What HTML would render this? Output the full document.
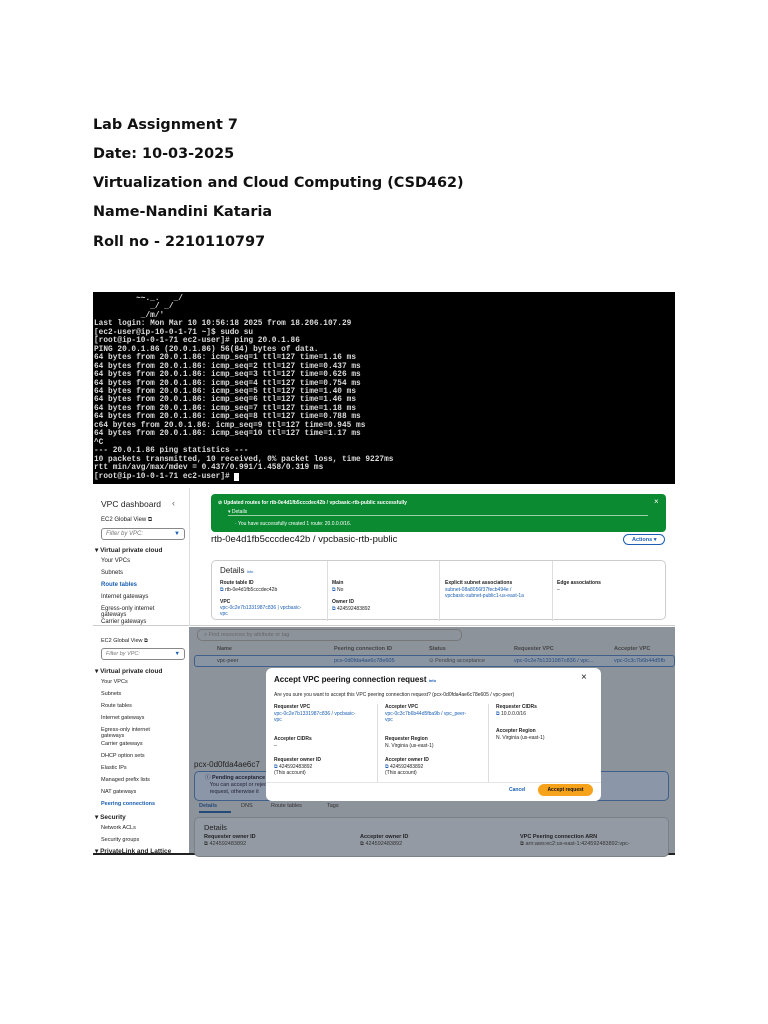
<!DOCTYPE html>
<html><head><meta charset="utf-8"><style>
*{margin:0;padding:0;box-sizing:border-box}
body{width:768px;height:1024px;background:#fff;position:relative;overflow:hidden;font-family:"DejaVu Sans","Liberation Sans",sans-serif}
.h{position:absolute;left:93px;font-weight:bold;font-size:14.4px;color:#111;white-space:nowrap}
.a{position:absolute;white-space:nowrap}
.term{position:absolute;left:93px;top:292px;width:582px;height:192px;background:#000;color:#dcdcdc;font-family:"Liberation Mono",monospace;font-weight:bold;font-size:7.8px;line-height:8.45px;padding:3px 0 0 1px;white-space:pre}
.s{font-family:"Liberation Sans",sans-serif;color:#222}
.lk{color:#1a5fb4}
</style></head><body>
<div class="h" style="top:117px">Lab Assignment 7</div>
<div class="h" style="top:146px">Date: 10-03-2025</div>
<div class="h" style="top:175px">Virtualization and Cloud Computing (CSD462)</div>
<div class="h" style="top:204px">Name-Nandini Kataria</div>
<div class="h" style="top:234px">Roll no - 2210110797</div>

<div class="term">         ~~._.   _/
            _/ _/
          _/m/'
Last login: Mon Mar 10 10:56:18 2025 from 18.206.107.29
[ec2-user@ip-10-0-1-71 ~]$ sudo su
[root@ip-10-0-1-71 ec2-user]# ping 20.0.1.86
PING 20.0.1.86 (20.0.1.86) 56(84) bytes of data.
64 bytes from 20.0.1.86: icmp_seq=1 ttl=127 time=1.16 ms
64 bytes from 20.0.1.86: icmp_seq=2 ttl=127 time=0.437 ms
64 bytes from 20.0.1.86: icmp_seq=3 ttl=127 time=0.626 ms
64 bytes from 20.0.1.86: icmp_seq=4 ttl=127 time=0.754 ms
64 bytes from 20.0.1.86: icmp_seq=5 ttl=127 time=1.40 ms
64 bytes from 20.0.1.86: icmp_seq=6 ttl=127 time=1.46 ms
64 bytes from 20.0.1.86: icmp_seq=7 ttl=127 time=1.18 ms
64 bytes from 20.0.1.86: icmp_seq=8 ttl=127 time=0.788 ms
c64 bytes from 20.0.1.86: icmp_seq=9 ttl=127 time=0.945 ms
64 bytes from 20.0.1.86: icmp_seq=10 ttl=127 time=1.17 ms
^C
--- 20.0.1.86 ping statistics ---
10 packets transmitted, 10 received, 0% packet loss, time 9227ms
rtt min/avg/max/mdev = 0.437/0.991/1.458/0.319 ms
[root@ip-10-0-1-71 ec2-user]# <span style="background:#fff">&nbsp;</span></div>

<!-- screenshot 2 -->
<div class="a s" style="left:93px;top:488px;width:582px;height:138px;background:#fff;border-bottom:1px solid #ccc;font-size:6px">
  <div class="a" style="left:96px;top:0;width:1px;height:138px;background:#ddd"></div>
  <div class="a" style="left:8px;top:11px;font-size:8.5px">VPC dashboard</div>
  <div class="a" style="left:79px;top:10px;font-size:9px;color:#666">‹</div>
  <div class="a" style="left:8px;top:29px">EC2 Global View ⧉</div>
  <div class="a" style="left:8px;top:40px;width:84px;height:12px;border:1px solid #888;border-radius:3px;font-style:italic;color:#777;padding:2px 4px">Filter by VPC: <span style="float:right;color:#1a5fb4">▼</span></div>
  <div class="a" style="left:2px;top:58px;font-weight:bold;font-size:6.5px">▾ Virtual private cloud</div>
  <div class="a" style="left:8px;top:70px">Your VPCs</div>
  <div class="a" style="left:8px;top:82px">Subnets</div>
  <div class="a lk" style="left:8px;top:94px;font-weight:bold">Route tables</div>
  <div class="a" style="left:8px;top:106px">Internet gateways</div>
  <div class="a" style="left:8px;top:118px">Egress-only internet<br>gateways</div>
  <div class="a" style="left:8px;top:131px">Carrier gateways</div>
  <div class="a" style="left:118px;top:6px;width:455px;height:38px;background:#0b8a32;border-radius:4px;color:#fff;font-size:5px">
    <div class="a" style="left:7px;top:6px;font-weight:bold">⊘ Updated routes for rtb-0e4d1fb5cccdec42b / vpcbasic-rtb-public successfully</div>
    <div class="a" style="left:17px;top:15px">▾ Details</div>
    <div class="a" style="left:17px;top:21px;width:420px;height:1px;background:#9fd1a9"></div>
    <div class="a" style="left:24px;top:27px">· You have successfully created 1 route: 20.0.0.0/16.</div>
    <div class="a" style="left:443px;top:3px;font-size:8px">×</div>
  </div>
  <div class="a" style="left:118px;top:46px;font-size:9.5px;color:#111">rtb-0e4d1fb5cccdec42b / vpcbasic-rtb-public</div>
  <div class="a lk" style="left:530px;top:46px;width:42px;height:11px;border:1px solid #1a5fb4;border-radius:6px;font-weight:bold;font-size:5.5px;padding:2px 0 0 8px">Actions ▾</div>
  <div class="a" style="left:118px;top:72px;width:455px;height:60px;border:1px solid #ccc;border-radius:5px">
    <div class="a" style="left:8px;top:5px;font-size:8px">Details <span class="lk" style="font-size:4px">Info</span></div>
    <div class="a" style="left:8px;top:19px;font-weight:bold;font-size:5px">Route table ID</div>
    <div class="a" style="left:8px;top:26px;font-size:5px"><span class="lk">⧉</span> rtb-0e4d1fb5cccdec42b</div>
    <div class="a" style="left:8px;top:38px;font-weight:bold;font-size:5px">VPC</div>
    <div class="a lk" style="left:8px;top:44px;font-size:5px">vpc-0c2e7b1331987c836 | vpcbasic-<br>vpc</div>
    <div class="a" style="left:115px;top:0;width:1px;height:60px;background:#ddd"></div>
    <div class="a" style="left:120px;top:19px;font-weight:bold;font-size:5px">Main</div>
    <div class="a" style="left:120px;top:26px;font-size:5px"><span class="lk">⧉</span> No</div>
    <div class="a" style="left:120px;top:38px;font-weight:bold;font-size:5px">Owner ID</div>
    <div class="a" style="left:120px;top:45px;font-size:5px"><span class="lk">⧉</span> 424592483892</div>
    <div class="a" style="left:227px;top:0;width:1px;height:60px;background:#ddd"></div>
    <div class="a" style="left:233px;top:19px;font-weight:bold;font-size:5px">Explicit subnet associations</div>
    <div class="a lk" style="left:233px;top:26px;font-size:5px">subnet-08a8056f37fecb494e /<br>vpcbasic-subnet-public1-us-east-1a</div>
    <div class="a" style="left:340px;top:0;width:1px;height:60px;background:#ddd"></div>
    <div class="a" style="left:345px;top:19px;font-weight:bold;font-size:5px">Edge associations</div>
    <div class="a" style="left:345px;top:26px;font-size:5px">–</div>
  </div>
</div>

<!-- screenshot 3 -->
<div class="a s" style="left:93px;top:627px;width:582px;height:228px;background:#fff;font-size:5.5px;border-bottom:2px solid #222">
  <div class="a" style="left:8px;top:11px">EC2 Global View ⧉</div>
  <div class="a" style="left:8px;top:21px;width:84px;height:12px;border:1px solid #888;border-radius:3px;font-style:italic;color:#777;padding:2px 4px">Filter by VPC: <span style="float:right;color:#1a5fb4">▼</span></div>
  <div class="a" style="left:2px;top:40px;font-weight:bold;font-size:6.5px">▾ Virtual private cloud</div>
  <div class="a" style="left:8px;top:52px">Your VPCs</div>
  <div class="a" style="left:8px;top:64px">Subnets</div>
  <div class="a" style="left:8px;top:76px">Route tables</div>
  <div class="a" style="left:8px;top:88px">Internet gateways</div>
  <div class="a" style="left:8px;top:100px">Egress-only internet<br>gateways</div>
  <div class="a" style="left:8px;top:114px">Carrier gateways</div>
  <div class="a" style="left:8px;top:126px">DHCP option sets</div>
  <div class="a" style="left:8px;top:138px">Elastic IPs</div>
  <div class="a" style="left:8px;top:150px">Managed prefix lists</div>
  <div class="a" style="left:8px;top:162px">NAT gateways</div>
  <div class="a lk" style="left:8px;top:174px;font-weight:bold">Peering connections</div>
  <div class="a" style="left:2px;top:186px;font-weight:bold;font-size:6.5px">▾ Security</div>
  <div class="a" style="left:8px;top:198px">Network ACLs</div>
  <div class="a" style="left:8px;top:210px">Security groups</div>
  <div class="a" style="left:2px;top:220px;font-weight:bold;font-size:6.5px">▾ PrivateLink and Lattice</div>

  <div class="a" style="left:96px;top:0;width:486px;height:226px;background:#8d939b">
    <div class="a" style="left:8px;top:2px;width:265px;height:12px;border:1px solid #777;border-radius:5px;color:#666;padding:2px 6px">⌕ Find resources by attribute or tag</div>
    <div class="a" style="left:28px;top:19px;color:#444;font-weight:bold">Name</div>
    <div class="a" style="left:145px;top:19px;color:#444;font-weight:bold">Peering connection ID</div>
    <div class="a" style="left:240px;top:19px;color:#444;font-weight:bold">Status</div>
    <div class="a" style="left:325px;top:19px;color:#444;font-weight:bold">Requester VPC</div>
    <div class="a" style="left:425px;top:19px;color:#444;font-weight:bold">Accepter VPC</div>
    <div class="a" style="left:5px;top:28px;width:481px;height:12px;border:1px solid #3f5f8a;border-radius:3px;background:#8a95a4"></div>
    <div class="a" style="left:28px;top:31px;color:#333">vpc-peer</div>
    <div class="a" style="left:145px;top:31px;color:#274e80">pcx-0d0fda4ae6c78e605</div>
    <div class="a" style="left:240px;top:31px;color:#444">⊙ Pending acceptance</div>
    <div class="a" style="left:325px;top:31px;color:#274e80">vpc-0c2e7b1331987c836 / vpc...</div>
    <div class="a" style="left:425px;top:31px;color:#274e80">vpc-0c3c7b6b44d5fb</div>
    <div class="a" style="left:5px;top:133px;color:#222;font-size:8px">pcx-0d0fda4ae6c7</div>
    <div class="a" style="left:5px;top:144px;width:475px;height:30px;border:1px solid #3f5f8a;border-radius:5px;background:#8b97a8;color:#223;padding:3px 10px;line-height:7px">ⓘ <b>Pending acceptance</b><br>&nbsp;&nbsp;&nbsp;You can accept or reject<br>&nbsp;&nbsp;&nbsp;request, otherwise it</div>
    <div class="a" style="left:10px;top:176px;color:#244a78;font-weight:bold">Details</div>
    <div class="a" style="left:10px;top:184px;width:32px;height:2px;background:#244a78"></div>
    <div class="a" style="left:52px;top:176px;color:#333">DNS</div>
    <div class="a" style="left:82px;top:176px;color:#333">Route tables</div>
    <div class="a" style="left:138px;top:176px;color:#333">Tags</div>
    <div class="a" style="left:5px;top:190px;width:475px;height:40px;border:1px solid #7b8189;border-radius:5px;background:#939aa3">
      <div class="a" style="left:9px;top:5px;font-size:7.5px;color:#222">Details</div>
      <div class="a" style="left:9px;top:16px;color:#222;font-weight:bold">Requester owner ID</div>
      <div class="a" style="left:9px;top:23px;color:#333">⧉ 424592483892</div>
      <div class="a" style="left:165px;top:16px;color:#222;font-weight:bold">Accepter owner ID</div>
      <div class="a" style="left:165px;top:23px;color:#333">⧉ 424592483892</div>
      <div class="a" style="left:325px;top:16px;color:#222;font-weight:bold">VPC Peering connection ARN</div>
      <div class="a" style="left:325px;top:23px;color:#333">⧉ arn:aws:ec2:us-east-1:424592483892:vpc-</div>
    </div>
  </div>

  <div class="a" style="left:173px;top:41px;width:335px;height:133px;background:#fff;border-radius:6px">
    <div class="a" style="left:8px;top:7px;font-size:8px;font-weight:bold;color:#111">Accept VPC peering connection request <span class="lk" style="font-size:4px">Info</span></div>
    <div class="a" style="left:315px;top:4px;font-size:10px">×</div>
    <div class="a" style="left:8px;top:24px;font-size:5px">Are you sure you want to accept this VPC peering connection request? (pcx-0d0fda4ae6c78e605 / vpc-peer)</div>
    <div class="a" style="left:8px;top:36px;font-weight:bold;font-size:5px">Requester VPC</div>
    <div class="a lk" style="left:8px;top:43px;font-size:5px">vpc-0c2e7b1331987c836 / vpcbasic-<br>vpc</div>
    <div class="a" style="left:8px;top:68px;font-weight:bold;font-size:5px">Accepter CIDRs</div>
    <div class="a" style="left:8px;top:75px;font-size:5px">–</div>
    <div class="a" style="left:8px;top:89px;font-weight:bold;font-size:5px">Requester owner ID</div>
    <div class="a" style="left:8px;top:96px;font-size:5px"><span class="lk">⧉</span> 424592483892<br>(This account)</div>
    <div class="a" style="left:111px;top:36px;width:1px;height:78px;background:#ddd"></div>
    <div class="a" style="left:119px;top:36px;font-weight:bold;font-size:5px">Accepter VPC</div>
    <div class="a lk" style="left:119px;top:43px;font-size:5px">vpc-0c3c7b6b44d5fba9b / vpc_peer-<br>vpc</div>
    <div class="a" style="left:119px;top:68px;font-weight:bold;font-size:5px">Requester Region</div>
    <div class="a" style="left:119px;top:75px;font-size:5px">N. Virginia (us-east-1)</div>
    <div class="a" style="left:119px;top:89px;font-weight:bold;font-size:5px">Accepter owner ID</div>
    <div class="a" style="left:119px;top:96px;font-size:5px"><span class="lk">⧉</span> 424592483892<br>(This account)</div>
    <div class="a" style="left:222px;top:36px;width:1px;height:78px;background:#ddd"></div>
    <div class="a" style="left:230px;top:36px;font-weight:bold;font-size:5px">Requester CIDRs</div>
    <div class="a" style="left:230px;top:43px;font-size:5px"><span class="lk">⧉</span> 10.0.0.0/16</div>
    <div class="a" style="left:230px;top:60px;font-weight:bold;font-size:5px">Accepter Region</div>
    <div class="a" style="left:230px;top:67px;font-size:5px">N. Virginia (us-east-1)</div>
    <div class="a" style="left:0;top:114px;width:335px;height:1px;background:#e5e5e5"></div>
    <div class="a lk" style="left:243px;top:119px;font-weight:bold;font-size:5px">Cancel</div>
    <div class="a" style="left:272px;top:116px;width:55px;height:12px;background:#f7a21b;border-radius:6px;font-weight:bold;font-size:5px;color:#111;padding-top:3px;text-align:center">Accept request</div>
  </div>
</div>
</body></html>
